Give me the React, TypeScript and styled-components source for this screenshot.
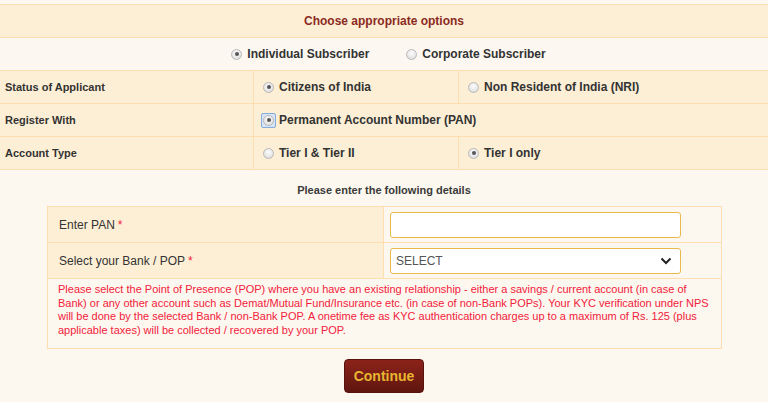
import styled, { createGlobalStyle } from 'styled-components';

const GlobalStyle = createGlobalStyle`
  html, body {
    margin: 0;
    padding: 0;
    background: #fcf8ef;
    font-family: 'Liberation Sans', Arial, sans-serif;
    color: #333;
  }
`;

const colors = {
  cream: '#fcf8ef',
  creamLight: '#fcf8f1',
  peach: '#fdefd5',
  border: '#fcdeb0',
  maroon: '#8b2a1f',
  red: '#f2213c',
  gold: '#e9b94c',
};

const Page = styled.div`
  width: 768px;
  height: 402px;
  overflow: hidden;
  background: ${colors.cream};
  padding-top: 4px;
  box-sizing: border-box;
`;

const OptionsTable = styled.div`
  border-top: 1px solid ${colors.border};
`;

const Row = styled.div<{ $light?: boolean }>`
  display: grid;
  grid-template-columns: 253px 205px 1fr;
  height: 33px;
  background: ${p => (p.$light ? colors.creamLight : colors.peach)};
  border-bottom: 1px solid ${colors.border};
  box-sizing: border-box;
`;

const HeaderCell = styled.div`
  grid-column: 1 / -1;
  display: flex;
  align-items: center;
  justify-content: center;
  color: ${colors.maroon};
  font-size: 12px;
  font-weight: bold;
`;

const CenterCell = styled.div`
  grid-column: 1 / -1;
  display: flex;
  align-items: center;
  justify-content: center;
  gap: 37px;
  padding-left: 9px;
`;

const LabelCell = styled.div`
  display: flex;
  align-items: center;
  padding-left: 5px;
  font-size: 11px;
  font-weight: bold;
`;

const OptionCell = styled.div<{ $wide?: boolean }>`
  display: flex;
  align-items: center;
  padding-left: 9px;
  border-left: 1px solid ${colors.border};
  grid-column: ${p => (p.$wide ? '2 / -1' : 'auto')};
`;

const RadioLabel = styled.label`
  display: inline-flex;
  align-items: center;
  gap: 5px;
  font-size: 12px;
  font-weight: bold;
  color: #333;
`;

const FocusRing = styled.span<{ $focused?: boolean }>`
  display: inline-flex;
  align-items: center;
  justify-content: center;
  width: 15px;
  height: 15px;
  margin: 0 -2px;
  box-sizing: border-box;
  border: 1px solid ${p => (p.$focused ? '#86abdd' : 'transparent')};
  background: ${p => (p.$focused ? '#d6e4f6' : 'transparent')};
  border-radius: 2px;
`;

const RadioDot = styled.span<{ $checked?: boolean }>`
  position: relative;
  width: 11px;
  height: 11px;
  border-radius: 50%;
  border: 1px solid #b9b9b9;
  background: radial-gradient(circle at 50% 35%, #fcfcfc 0%, #e3e3e3 70%, #d2d2d2 100%);
  box-sizing: border-box;

  &::after {
    content: '';
    display: ${p => (p.$checked ? 'block' : 'none')};
    position: absolute;
    left: 2.5px;
    top: 2.5px;
    width: 4px;
    height: 4px;
    border-radius: 50%;
    background: #555;
  }
`;

const Radio = ({ label, checked, focused }: { label: string; checked?: boolean; focused?: boolean }) => (
  <RadioLabel>
    <FocusRing $focused={focused}>
      <RadioDot $checked={checked} />
    </FocusRing>
    {label}
  </RadioLabel>
);

const SubTitle = styled.div`
  text-align: center;
  font-size: 11px;
  font-weight: bold;
  color: #3a3a3a;
  padding-top: 14px;
  height: 36px;
  box-sizing: border-box;
`;

const DetailsTable = styled.div`
  margin: 0 46px 0 47px;
  border: 1px solid ${colors.border};
  display: grid;
  grid-template-columns: 336px 1fr;
`;

const FieldLabel = styled.div`
  background: ${colors.peach};
  border-bottom: 1px solid ${colors.border};
  border-right: 1px solid ${colors.border};
  display: flex;
  align-items: center;
  padding-left: 11px;
  height: 36px;
  box-sizing: border-box;
  font-size: 12px;
  color: #333;
`;

const Required = styled.span`
  color: ${colors.red};
  margin-left: 3px;
`;

const FieldCell = styled.div`
  border-bottom: 1px solid ${colors.border};
  display: flex;
  align-items: center;
  padding-left: 6px;
  height: 36px;
  box-sizing: border-box;
`;

const TextInput = styled.input`
  width: 291px;
  height: 26px;
  box-sizing: border-box;
  border: 1px solid ${colors.gold};
  border-radius: 3px;
  background: #fff;
  outline: none;
`;

const SelectBox = styled.div`
  width: 291px;
  height: 26px;
  box-sizing: border-box;
  border: 1px solid ${colors.gold};
  border-radius: 3px;
  background: #fff;
  display: flex;
  align-items: center;
  justify-content: space-between;
  padding: 0 8px 0 5px;
  font-size: 12px;
  color: #555;
`;

const Note = styled.p`
  grid-column: 1 / -1;
  margin: 0;
  padding: 4px 10px 10px 10px;
  font-size: 11px;
  line-height: 13.7px;
  color: ${colors.red};
`;

const ButtonRow = styled.div`
  display: flex;
  justify-content: center;
  padding-top: 10px;
`;

const ContinueButton = styled.button`
  width: 80px;
  height: 34px;
  border: 1px solid #5a140e;
  border-radius: 4px;
  background: linear-gradient(#8c231a, #5f160f);
  color: #e7b632;
  font-family: 'Liberation Sans', Arial, sans-serif;
  font-size: 14px;
  font-weight: bold;
  cursor: pointer;
`;

const Chevron = () => (
  <svg width="12" height="8" viewBox="0 0 12 8">
    <path d="M1.5 1.5 L6 6 L10.5 1.5" fill="none" stroke="#222" strokeWidth="2" />
  </svg>
);

const App = () => (
  <Page>
    <GlobalStyle />
    <OptionsTable>
      <Row>
        <HeaderCell>Choose appropriate options</HeaderCell>
      </Row>
      <Row $light>
        <CenterCell>
          <Radio label="Individual Subscriber" checked />
          <Radio label="Corporate Subscriber" />
        </CenterCell>
      </Row>
      <Row>
        <LabelCell>Status of Applicant</LabelCell>
        <OptionCell>
          <Radio label="Citizens of India" checked />
        </OptionCell>
        <OptionCell>
          <Radio label="Non Resident of India (NRI)" />
        </OptionCell>
      </Row>
      <Row>
        <LabelCell>Register With</LabelCell>
        <OptionCell $wide>
          <Radio label="Permanent Account Number (PAN)" checked focused />
        </OptionCell>
      </Row>
      <Row>
        <LabelCell>Account Type</LabelCell>
        <OptionCell>
          <Radio label="Tier I & Tier II" />
        </OptionCell>
        <OptionCell>
          <Radio label="Tier I only" checked />
        </OptionCell>
      </Row>
    </OptionsTable>
    <SubTitle>Please enter the following details</SubTitle>
    <DetailsTable>
      <FieldLabel>
        Enter PAN<Required>*</Required>
      </FieldLabel>
      <FieldCell>
        <TextInput type="text" />
      </FieldCell>
      <FieldLabel>
        Select your Bank / POP<Required>*</Required>
      </FieldLabel>
      <FieldCell>
        <SelectBox>
          SELECT
          <Chevron />
        </SelectBox>
      </FieldCell>
      <Note>
        Please select the Point of Presence (POP) where you have an existing relationship - either a savings / current
        account (in case of Bank) or any other account such as Demat/Mutual Fund/Insurance etc. (in case of non-Bank
        POPs). Your KYC verification under NPS will be done by the selected Bank / non-Bank POP. A onetime fee as KYC
        authentication charges up to a maximum of Rs. 125 (plus applicable taxes) will be collected / recovered by your
        POP.
      </Note>
    </DetailsTable>
    <ButtonRow>
      <ContinueButton>Continue</ContinueButton>
    </ButtonRow>
  </Page>
);

export default App;
